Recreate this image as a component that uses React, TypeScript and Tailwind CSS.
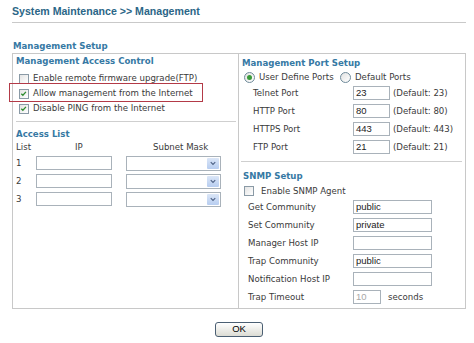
import React from "react";

const body = "font-['DejaVu_Sans',Verdana,sans-serif]";

function Check({ checked }: { checked?: boolean }) {
  return (
    <span className="relative inline-block w-[10px] h-[10px] border border-[#8a9aa6] bg-gradient-to-br from-[#e4e4e4] to-white shrink-0">
      {checked && (
        <svg viewBox="0 0 10 10" className="absolute left-0 top-0 w-[8px] h-[8px]">
          <path d="M1.6 4.6 L3.6 6.6 L7.4 2.4" fill="none" stroke="#2e8b2e" strokeWidth="1.6" />
        </svg>
      )}
    </span>
  );
}

function Radio({ checked }: { checked?: boolean }) {
  return (
    <span className="relative inline-flex items-center justify-center w-[11px] h-[11px] rounded-full border border-[#6f8a9a] bg-gradient-to-br from-[#e2e2e2] to-white shrink-0">
      {checked && <span className="w-[5px] h-[5px] rounded-full bg-[#3a9a3a]" />}
    </span>
  );
}

function TextBox({ w, value, disabled }: { w: string; value?: string; disabled?: boolean }) {
  return (
    <div
      className={`${w} h-[14px] border border-[#a9b2ba] bg-white flex items-center pl-[2px] ${
        disabled ? "text-[#a8a8a8]" : "text-[#222]"
      } font-['Liberation_Sans',Arial,sans-serif] text-[9.5px]`}
    >
      {value}
    </div>
  );
}

function SelectBox() {
  return (
    <div className="w-[95px] h-[15px] border border-[#a9b2ba] bg-white flex justify-end items-stretch p-[1px]">
      <div className="w-[12px] bg-gradient-to-b from-[#dbe6f7] to-[#b7cdf0] flex items-center justify-center rounded-[1px]">
        <svg viewBox="0 0 8 6" className="w-[6px] h-[5px]">
          <path d="M1 1.2 L4 4.2 L7 1.2" fill="none" stroke="#4d6185" strokeWidth="1.5" />
        </svg>
      </div>
    </div>
  );
}

export default function App() {
  const heading = "font-bold text-[#3679a4] text-[8.6px]";
  return (
    <div className={`relative w-[474px] h-[343px] bg-white overflow-hidden ${body} text-[8.6px] text-[#3a3a3a]`}>
      {/* Title */}
      <div className="h-[22px] pl-[12px] pt-[4px] font-['Liberation_Sans',Arial,sans-serif] font-bold text-[10.6px] text-[#2b6687]">
        System Maintenance &gt;&gt; Management
      </div>
      <div className="ml-[12px] w-[454px] h-px bg-[#c9c9c9]" />

      {/* Management Setup */}
      <div className={`mt-[17px] h-[13px] pl-[13px] leading-[13px] ${heading}`}>Management Setup</div>
      <div className="ml-[12px] w-[454px] h-[256px] border border-[#c8c8c8] flex">
        {/* Left column */}
        <div className="w-[226px] border-r border-[#c8c8c8] flex flex-col">
          <div className={`h-[14px] leading-[14px] pl-[3px] ${heading}`}>Management Access Control</div>
          <div className="mt-[3px] flex flex-col">
            <div className="h-[15px] flex items-center pl-[6px] gap-[4px]">
              <Check />
              <span>Enable remote firmware upgrade(FTP)</span>
            </div>
            <div className="h-[15px] flex items-center pl-[6px] gap-[4px]">
              <Check checked />
              <span>Allow management from the Internet</span>
            </div>
            <div className="h-[15px] flex items-center pl-[6px] gap-[4px]">
              <Check checked />
              <span>Disable PING from the Internet</span>
            </div>
          </div>
          <div className="mt-[5px] ml-[3px] mr-[2px] h-px bg-[#cfcfcf]" />
          <div className={`mt-[6px] h-[12px] leading-[12px] pl-[3px] ${heading}`}>Access List</div>
          <div className="mt-[1px] h-[13px] leading-[13px] pl-[3px] flex">
            <span className="w-[59px]">List</span>
            <span className="w-[78px]">IP</span>
            <span>Subnet Mask</span>
          </div>
          {["1", "2", "3"].map((n) => (
            <div key={n} className="h-[18px] flex items-center pl-[3px]">
              <span className="w-[20px]">{n}</span>
              <TextBox w="w-[76px]" />
              <div className="ml-[14px]">
                <SelectBox />
              </div>
            </div>
          ))}
        </div>

        {/* Right column */}
        <div className="flex-1 flex flex-col">
          <div className={`mt-[2px] h-[14px] leading-[14px] pl-[3px] ${heading}`}>Management Port Setup</div>
          <div className="mt-[1px] h-[13px] flex items-center pl-[5px]">
            <Radio checked />
            <span className="ml-[4px] w-[81px]">User Define Ports</span>
            <Radio />
            <span className="ml-[4px]">Default Ports</span>
          </div>
          {[
            ["Telnet Port", "23"],
            ["HTTP Port", "80"],
            ["HTTPS Port", "443"],
            ["FTP Port", "21"],
          ].map(([l, v]) => (
            <div key={l} className="h-[18px] flex items-center pl-[14px]">
              <span className="w-[100px]">{l}</span>
              <TextBox w="w-[37px]" value={v} />
              <span className="ml-[3px]">(Default: {v})</span>
            </div>
          ))}
          <div className="mt-[5px] ml-[2px] mr-[3px] h-px bg-[#cfcfcf]" />
          <div className={`mt-[7px] h-[14px] leading-[14px] pl-[4px] ${heading}`}>SNMP Setup</div>
          <div className="mt-[1px] h-[14px] flex items-center pl-[5px]">
            <Check />
            <span className="ml-[7px]">Enable SNMP Agent</span>
          </div>
          {[
            ["Get Community", "public"],
            ["Set Community", "private"],
            ["Manager Host IP", ""],
            ["Trap Community", "public"],
            ["Notification Host IP", ""],
          ].map(([l, v]) => (
            <div key={l} className="h-[18px] flex items-center pl-[9px]">
              <span className="w-[105px]">{l}</span>
              <TextBox w="w-[79px]" value={v} />
            </div>
          ))}
          <div className="h-[18px] flex items-center pl-[9px]">
            <span className="w-[105px]">Trap Timeout</span>
            <TextBox w="w-[28px]" value="10" disabled />
            <span className="ml-[7px]">seconds</span>
          </div>
        </div>
      </div>

      {/* OK button */}
      <div className="mt-[13px] flex pl-[215px]">
        <div className="w-[48px] h-[15px] rounded-[3px] border border-[#4b5f73] bg-gradient-to-b from-white to-[#dcdcd4] flex items-center justify-center font-['Liberation_Sans',Arial,sans-serif] text-[9.5px] text-black">
          OK
        </div>
      </div>

      {/* Red highlight annotation */}
      <div className="absolute left-[9px] top-[83px] w-[194px] h-[19px] border-[1.5px] border-[#b33a47]" />
    </div>
  );
}
